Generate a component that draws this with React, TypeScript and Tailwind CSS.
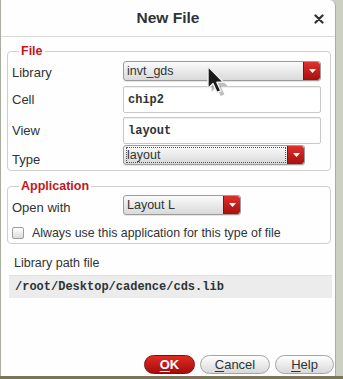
import React from "react";

function Arrow() {
  return (
    <div className="w-[17px] h-full rounded-r-[3px] bg-gradient-to-b from-[#e0302b] to-[#a80e0e] border-l border-[#8d0b0b] flex items-center justify-center shrink-0">
      <svg width="7" height="4" viewBox="0 0 7 4">
        <path d="M0 0 L7 0 L3.5 4 Z" fill="#fff" />
      </svg>
    </div>
  );
}

function Combo({ text, w, focus }: { text: string; w: string; focus?: boolean }) {
  return (
    <div className={`${w} h-[20px] flex rounded-[3px] border border-[#9c9c9c] bg-gradient-to-b from-[#fbfbfb] to-[#d9d9d9] overflow-hidden shadow-[0_1px_0_#e6e6e6]`}>
      <div className="flex-1 flex items-center pl-[2px] pr-[1px] py-[1px]">
        <div className={`w-full h-full flex items-center text-[12.5px] text-[#2e3436] ${focus ? "border border-dotted border-[#555]" : "border border-transparent"}`}>
          <span className="leading-none">{text}</span>
        </div>
      </div>
      <Arrow />
    </div>
  );
}

function TextInput({ value }: { value: string }) {
  return (
    <div className="w-[198px] h-[27px] border border-[#c8c8c8] rounded-[2px] bg-white flex items-center pl-[4px] shadow-[inset_0_1px_1px_#eee]">
      <span className="font-['Liberation_Mono',monospace] font-bold text-[12px] text-[#2e3436] leading-none">{value}</span>
    </div>
  );
}

function Btn({ children, w, red }: { children: React.ReactNode; w: string; red?: boolean }) {
  return (
    <div
      className={`${w} h-[19px] rounded-full flex items-center justify-center text-[13px] leading-none ${
        red
          ? "bg-gradient-to-b from-[#e02a22] to-[#a50c0c] border border-[#8a0a0a] text-white font-bold"
          : "bg-gradient-to-b from-[#ffffff] to-[#d8d8d8] border border-[#a5a5a5] text-[#2e3436]"
      }`}
    >
      {children}
    </div>
  );
}

export default function App() {
  return (
    <div className="relative w-[343px] h-[379px] bg-[#cbd0c3] overflow-hidden font-['Liberation_Sans',Arial,sans-serif] text-[#2e3436]">
      <div className="flex flex-col w-[336px] h-[376px] bg-[#fefefe] border-l border-r border-[#a9ada0] rounded-tr-[6px]">
        {/* Title bar */}
        <div className="relative h-[37px] shrink-0 border-b border-[#d8d8d8] flex items-center justify-center">
          <span className="text-[15.5px] font-bold text-[#2e3436] leading-none">New File</span>
          <svg className="absolute left-[313px] top-[14px]" width="10" height="10" viewBox="0 0 10 10">
            <path d="M1.5 1.5 L8.5 8.5 M8.5 1.5 L1.5 8.5" stroke="#2e3436" strokeWidth="2.3" strokeLinecap="round" />
          </svg>
        </div>

        <div className="flex-1 flex flex-col pl-[6px] pr-[4px] pt-[7px]">
          {/* File group */}
          <fieldset className="border border-[#cfcfcf] rounded-[4px] px-[4px] pt-[2px] pb-[5px]">
            <legend className="ml-[7px] px-[2px] text-[12.5px] leading-[15px] font-bold text-[#c4161c]">File</legend>
            <div className="flex items-center h-[20px]">
              <span className="w-[111px] text-[13px] leading-none pt-[2px]">Library</span>
              <Combo text="invt_gds" w="w-[198px]" />
            </div>
            <div className="flex items-center h-[27px] mt-[5px]">
              <span className="w-[111px] text-[13px] leading-none">Cell</span>
              <TextInput value="chip2" />
            </div>
            <div className="flex items-center h-[27px] mt-[4px]">
              <span className="w-[111px] text-[13px] leading-none">View</span>
              <TextInput value="layout" />
            </div>
            <div className="flex items-center h-[20px] mt-[1px]">
              <span className="w-[111px] text-[13px] leading-none pt-[8px]">Type</span>
              <Combo text="layout" w="w-[182px]" focus />
            </div>
          </fieldset>

          {/* Application group */}
          <fieldset className="mt-[8px] border border-[#cfcfcf] rounded-[4px] px-[4px] pt-[1px] pb-[3px]">
            <legend className="ml-[7px] px-[2px] text-[12.5px] leading-[15px] font-bold text-[#c4161c]">Application</legend>
            <div className="flex items-center h-[20px]">
              <span className="w-[111px] text-[13px] leading-none pt-[4px]">Open with</span>
              <Combo text="Layout L" w="w-[118px]" />
            </div>
            <div className="flex items-center h-[14px] mt-[11px]">
              <div className="w-[12px] h-[12px] rounded-[2px] border border-[#9d9d9d] bg-gradient-to-b from-[#ffffff] to-[#dcdcdc] mr-[8px]" />
              <span className="text-[12.4px] leading-none">Always use this application for this type of file</span>
            </div>
          </fieldset>

          <div className="ml-[7px] mt-[12px] text-[12.5px] leading-[15px]">Library path file</div>
          <div className="ml-[2px] mt-[4px] w-[323px] h-[23px] bg-[#ececec] border-t border-[#e0e0e0] flex items-center pl-[6px]">
            <span className="font-['Liberation_Mono',monospace] font-bold text-[12px] leading-none text-[#2e3436]">/root/Desktop/cadence/cds.lib</span>
          </div>

          <div className="mt-auto mb-[2px] flex justify-end items-center gap-[5px] mr-[-3px]">
            <Btn w="w-[51px]" red>
              <span><span className="underline underline-offset-2">O</span>K</span>
            </Btn>
            <Btn w="w-[70px]">
              <span><span className="underline underline-offset-2">C</span>ancel</span>
            </Btn>
            <Btn w="w-[59px]">
              <span><span className="underline underline-offset-2">H</span>elp</span>
            </Btn>
          </div>
        </div>
      </div>
      <div className="h-[3px] bg-[#7b7458]" />

      {/* mouse cursor */}
      <svg className="absolute left-[206px] top-[65px]" width="22" height="32" viewBox="0 0 22 32">
        <path d="M4 4 L4 26 L9 21 L13 30 L17 28.5 L13 20 L20 20 Z" fill="#000" opacity="0.25" transform="translate(1.5 1)" />
        <path d="M2 1.5 L2 23.5 L7 18.5 L11 27.5 L14.8 25.8 L10.8 17.3 L17.5 17.3 Z" fill="#1a1a1a" stroke="#f0f0f0" strokeWidth="1.4" strokeLinejoin="round" />
      </svg>
    </div>
  );
}
